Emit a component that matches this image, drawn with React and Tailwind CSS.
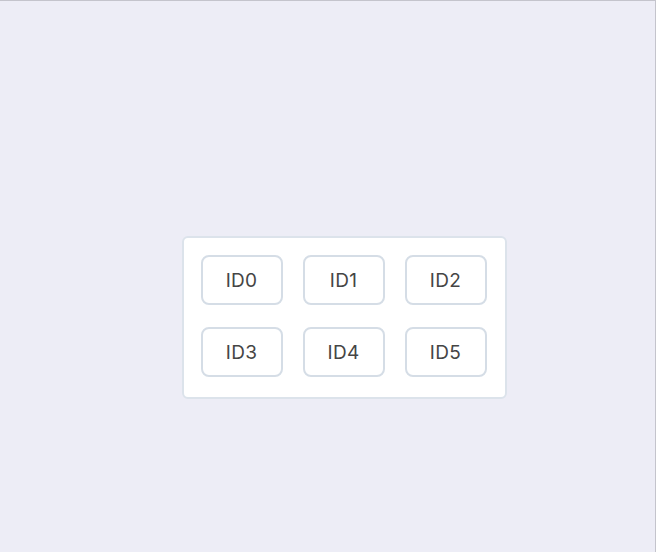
const ids = ["ID0", "ID1", "ID2", "ID3", "ID4", "ID5"];

export default function App() {
  return (
    <div className="flex h-[552px] w-[658px] bg-white">
      <div className="flex h-full w-[656px] items-center justify-center border-t border-r border-[#c4c4cc] bg-[#ededf6] pl-[33px] pt-[82px]">
        <div className="grid grid-cols-3 gap-x-[20px] gap-y-[22px] rounded-[6px] border-2 border-[#dce3eb] bg-white pl-[17px] pr-[18px] pt-[17px] pb-[20px]">
          {ids.map((id) => (
            <button
              key={id}
              className="flex h-[50px] w-[82px] items-center justify-center rounded-[8px] border-2 border-[#d5dde6] bg-white pt-[2px] text-[19px] tracking-[0.3px] text-[#454545]"
              style={{ fontFamily: "Inter, 'Open Sans', sans-serif" }}
            >
              {id}
            </button>
          ))}
        </div>
      </div>
    </div>
  );
}
